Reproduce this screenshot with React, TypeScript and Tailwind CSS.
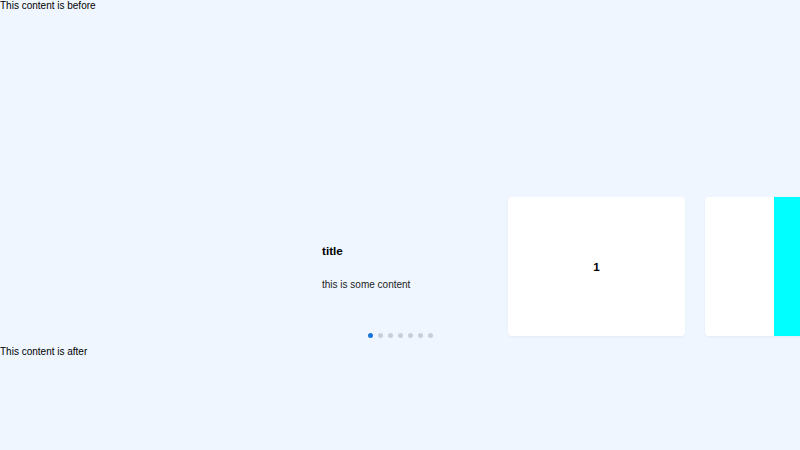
export default function App() {
  const dots = [0, 1, 2, 3, 4, 5, 6]

  return (
    <div className="min-h-screen w-full overflow-hidden bg-[#eff6ff] text-black [font-family:'Liberation_Sans',Arial,sans-serif]">
      <div className="h-[12px] text-[10px] leading-[12px]">This content is before</div>

      <section className="relative h-[334px] overflow-hidden">
        <div className="flex pt-[185px]">
          <div className="ml-[322px] w-[186px] shrink-0 pt-[47px]">
            <h3 className="text-[11.7px] leading-[14px] font-bold">title</h3>
            <p className="mt-[21px] text-[10px] leading-[12px] text-[#222]">this is some content</p>
          </div>

          <div className="flex shrink-0 gap-[20px]">
            <div className="flex h-[139px] w-[177px] items-center justify-center rounded-[4px] bg-white shadow-[0_1px_3px_rgba(0,0,0,0.05)]">
              <span className="text-[11.7px] font-bold">1</span>
            </div>
            <div className="flex h-[139px] w-[177px] overflow-hidden rounded-[4px] bg-white shadow-[0_1px_3px_rgba(0,0,0,0.05)]">
              <div className="w-[69px] shrink-0" />
              <div className="flex-1 bg-[#00ffff]" />
            </div>
          </div>
        </div>

        {/* pagination dots */}
        <div className="absolute bottom-[8px] left-[367.5px] flex gap-[5px]">
          {dots.map((d) => (
            <span
              key={d}
              className={d === 0 ? "h-[5px] w-[5px] rounded-full bg-[#1a73d9]" : "h-[5px] w-[5px] rounded-full bg-[#c9ced6]"}
            />
          ))}
        </div>
      </section>

      <div className="h-[12px] text-[10px] leading-[12px]">This content is after</div>
    </div>
  )
}
